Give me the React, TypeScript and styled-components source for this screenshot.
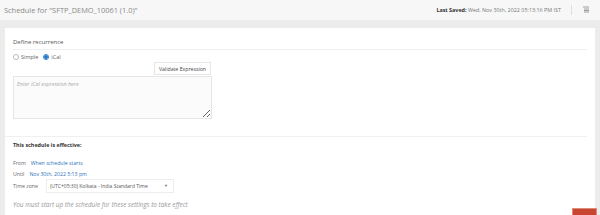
import React from 'react'
import styled, { createGlobalStyle } from 'styled-components'

const GlobalStyle = createGlobalStyle`
  html, body {
    margin: 0;
    padding: 0;
    background: #ececec;
    font-family: "Open Sans", "Noto Sans", sans-serif;
    color: #555;
  }
`

const Page = styled.div`
  position: relative;
  width: 600px;
  height: 215px;
  overflow: hidden;
  background: #ececec;
`

const Header = styled.div`
  height: 20px;
  background: #f7f7f7;
  display: flex;
  align-items: center;
  justify-content: space-between;
  padding: 0 4px;
  box-sizing: border-box;
`

const Title = styled.div`
  font-size: 7.4px;
  color: #8a8a8a;
`

const HeaderRight = styled.div`
  display: flex;
  align-items: center;
  gap: 10px;
  padding-right: 6px;
`

const Saved = styled.div`
  font-size: 5.4px;
  color: #777;
  b {
    color: #333;
    font-weight: 700;
  }
`

const Divider = styled.div`
  width: 1px;
  height: 10px;
  background: #ddd;
`

const Main = styled.div`
  padding: 8px 5px 0 5px;
`

const Card = styled.div`
  background: #fff;
  height: 200px;
  padding: 10px 8px 0 8px;
  box-sizing: border-box;
`

const SectionTitle = styled.div`
  font-size: 6px;
  color: #555;
  line-height: 8px;
  padding-bottom: 3px;
  border-bottom: 1px solid #f0f0f0;
`

const RadioRow = styled.div`
  display: flex;
  align-items: center;
  gap: 2px;
  margin-top: 3px;
  font-size: 5.5px;
  color: #666;
  height: 8px;
`

const Radio = styled.span<{ $on?: boolean }>`
  width: 4px;
  height: 4px;
  border-radius: 50%;
  border: 0.7px solid ${p => (p.$on ? '#2b7fc8' : '#bbb')};
  background: ${p => (p.$on ? 'radial-gradient(circle, #1d76d2 55%, #fff 60%)' : '#fff')};
  margin-left: ${p => (p.$on ? '3px' : '0')};
`

const Editor = styled.div`
  width: 199px;
  display: flex;
  flex-direction: column;
  align-items: flex-end;
  margin-top: 1px;
`

const Button = styled.button`
  font-family: inherit;
  font-size: 5.2px;
  color: #444;
  background: #fff;
  border: 1px solid #e6e6e6;
  height: 13px;
  padding: 0 4px;
  margin-right: 1px;
`

const Area = styled.textarea`
  margin-top: 1px;
  width: 199px;
  height: 43px;
  box-sizing: border-box;
  border: 1px solid #e6e6e6;
  background: #fbfbfb;
  font-family: inherit;
  font-size: 5.4px;
  padding: 3px;
  resize: vertical;
  outline: none;
  &::placeholder {
    color: #aaa;
    font-style: italic;
  }
`

const Separator = styled.div`
  height: 1px;
  background: #f0f0f0;
  margin: 17px 0 0 -8px;
`

const Effective = styled.div`
  font-size: 5.4px;
  font-weight: 700;
  color: #333;
  margin-top: 4px;
  line-height: 8px;
`

const InfoRow = styled.div<{ $gap?: number }>`
  display: flex;
  align-items: center;
  gap: 5px;
  font-size: 5.2px;
  color: #666;
  height: 11px;
  margin-top: ${p => p.$gap ?? 0}px;
`

const Link = styled.span`
  color: #2e72b8;
`

const Select = styled.div`
  width: 128px;
  height: 14px;
  box-sizing: border-box;
  border: 1px solid #eee;
  display: flex;
  align-items: center;
  justify-content: space-between;
  padding: 0 5px 0 3px;
  margin-left: 3px;
  font-size: 5px;
  color: #555;
`

const Caret = styled.span`
  font-size: 4px;
  color: #777;
`

const Note = styled.div`
  font-size: 6.4px;
  font-style: italic;
  color: #999;
  margin-top: 9px;
`

const RedTab = styled.div`
  position: absolute;
  right: 3px;
  bottom: 0;
  width: 25px;
  height: 7px;
  background: #c8452f;
  border: 1px solid #e08a7c;
  box-sizing: border-box;
  border-bottom: none;
`

const Scrollbar = styled.div`
  position: absolute;
  right: 0;
  top: 28px;
  bottom: 0;
  width: 5px;
  background: #ececec;
`

const MenuIcon = () => (
  <svg width="8" height="8" viewBox="0 0 8 8">
    <path d="M1 1h6M2 3h5M2 4.5h5M2 6h5" stroke="#888" strokeWidth="0.8" />
  </svg>
)

export default function App() {
  return (
    <Page>
      <GlobalStyle />
      <Header>
        <Title>Schedule for "SFTP_DEMO_10061 (1.0)"</Title>
        <HeaderRight>
          <Saved>
            <b>Last Saved:</b> Wed, Nov 30th, 2022 05:13:16 PM IST
          </Saved>
          <Divider />
          <MenuIcon />
        </HeaderRight>
      </Header>
      <Main>
        <Card>
          <SectionTitle>Define recurrence</SectionTitle>
          <RadioRow>
            <Radio />
            <span>Simple</span>
            <Radio $on />
            <span>iCal</span>
          </RadioRow>
          <Editor>
            <Button>Validate Expression</Button>
            <Area placeholder="Enter iCal expression here" />
          </Editor>
          <Separator />
          <Effective>This schedule is effective:</Effective>
          <InfoRow $gap={8}>
            <span>From</span>
            <Link>When schedule starts</Link>
          </InfoRow>
          <InfoRow>
            <span>Until</span>
            <Link>Nov 30th, 2022 5:13 pm</Link>
          </InfoRow>
          <InfoRow $gap={1}>
            <span>Time zone</span>
            <Select>
              <span>(UTC+05:30) Kolkata - India Standard Time</span>
              <Caret>▼</Caret>
            </Select>
          </InfoRow>
          <Note>You must start up the schedule for these settings to take effect</Note>
        </Card>
      </Main>
      <Scrollbar />
      <RedTab />
    </Page>
  )
}
